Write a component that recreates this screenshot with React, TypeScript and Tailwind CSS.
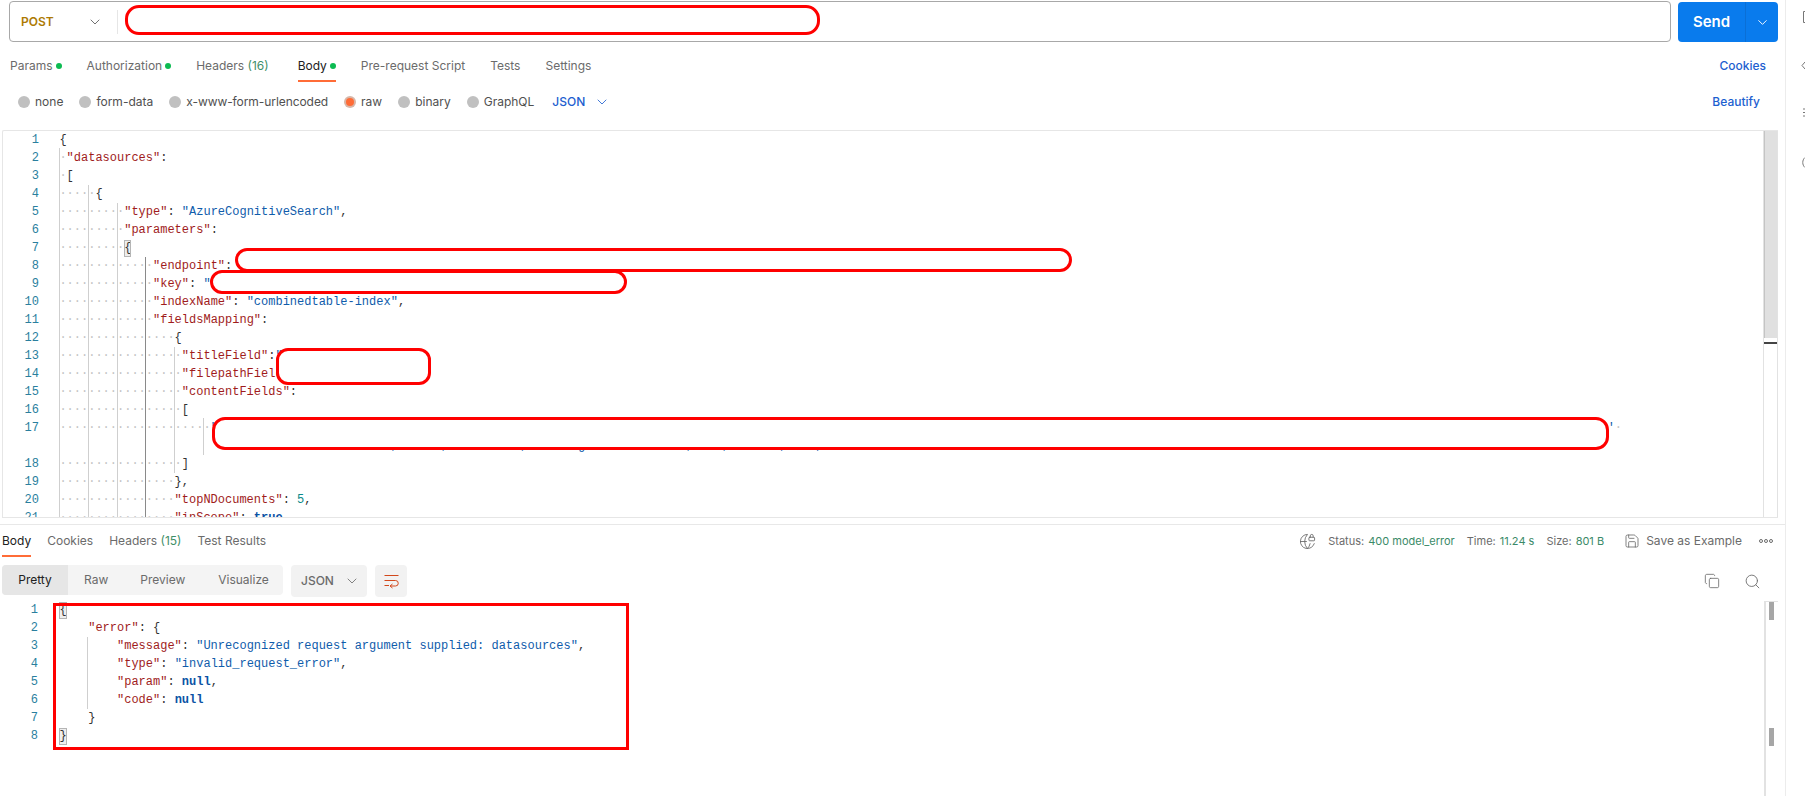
import React from "react";
import { ChevronDown, Copy, GlobeLock, Save, Search } from "lucide-react";

const Key = ({ children }: { children: React.ReactNode }) => <span className="text-[#a01c1c]">{children}</span>;
const Str = ({ children }: { children: React.ReactNode }) => <span className="text-[#0f5cab]">{children}</span>;
const Kw = ({ children }: { children: React.ReactNode }) => <span className="font-bold text-[#0b53a5]">{children}</span>;
const Match = ({ children }: { children: React.ReactNode }) => (
  <span className="inline-block h-[17px] bg-[#eeeeee] leading-[17px] outline outline-1 -outline-offset-1 outline-[#b5b5b5]">{children}</span>
);

type Line = { n?: number; indent?: number; body: React.ReactNode };

const requestLines: Line[] = [
  { n: 1, body: "{" },
  { n: 2, indent: 1, body: <><Key>"datasources"</Key>:</> },
  { n: 3, indent: 1, body: "[" },
  { n: 4, indent: 5, body: "{" },
  { n: 5, indent: 9, body: <><Key>"type"</Key>: <Str>"AzureCognitiveSearch"</Str>,</> },
  { n: 6, indent: 9, body: <><Key>"parameters"</Key>:</> },
  { n: 7, indent: 9, body: <Match>{"{"}</Match> },
  { n: 8, indent: 13, body: <><Key>"endpoint"</Key>:</> },
  { n: 9, indent: 13, body: <><Key>"key"</Key>: <Str>"</Str></> },
  { n: 10, indent: 13, body: <><Key>"indexName"</Key>: <Str>"combinedtable-index"</Str>,</> },
  { n: 11, indent: 13, body: <><Key>"fieldsMapping"</Key>:</> },
  { n: 12, indent: 16, body: "{" },
  { n: 13, indent: 17, body: <><Key>"titleField"</Key>:<Str>"</Str></> },
  { n: 14, indent: 17, body: <Key>"filepathField"</Key> },
  { n: 15, indent: 17, body: <><Key>"contentFields"</Key>:</> },
  { n: 16, indent: 17, body: "[" },
  { n: 17, indent: 21, body: <><Str>{'"' + " ".repeat(193) + "'"}</Str><span className="text-[#c4c4c4]">·</span></> },
  // only the tails of the wrapped row show under the red mark
  { body: <Str>{"                                              ,      ,          ,       g              ,    ,       ,    ,"}</Str> },
  { n: 18, indent: 17, body: "]" },
  { n: 19, indent: 16, body: "}," },
  { n: 20, indent: 16, body: <><Key>"topNDocuments"</Key>: <span className="text-[#0a8a8a]">5</span>,</> },
  { n: 21, indent: 16, body: <><Key>"inScope"</Key>: <Kw>true</Kw></> },
];

const responseLines: Line[] = [
  { n: 1, body: <Match>{"{"}</Match> },
  { n: 2, body: <>{"    "}<Key>"error"</Key>: {"{"}</> },
  { n: 3, body: <>{"        "}<Key>"message"</Key>: <Str>"Unrecognized request argument supplied: datasources"</Str>,</> },
  { n: 4, body: <>{"        "}<Key>"type"</Key>: <Str>"invalid_request_error"</Str>,</> },
  { n: 5, body: <>{"        "}<Key>"param"</Key>: <Kw>null</Kw>,</> },
  { n: 6, body: <>{"        "}<Key>"code"</Key>: <Kw>null</Kw></> },
  { n: 7, body: "    }" },
  { n: 8, body: <Match>{"}"}</Match> },
];

const CodeRow = ({ line }: { line: Line }) => (
  <div className="h-[18px] whitespace-pre leading-[18px] text-[#333333]">
    {line.indent ? <span className="text-[#c4c4c4]">{"·".repeat(line.indent)}</span> : null}
    {line.body}
  </div>
);

const Gutter = ({ lines }: { lines: Line[] }) => (
  <div className="shrink-0 text-right leading-[18px] text-[#2a7f9e]">
    {lines.map((l, i) => (
      <div key={i} className="h-[18px]">{l.n ?? ""}</div>
    ))}
  </div>
);

const Dot = () => <span className="h-[6px] w-[6px] rounded-full bg-[#0cbb52]" />;

const Tab = ({ label, count, dot, active }: { label: string; count?: string; dot?: boolean; active?: boolean }) => (
  <div className={`flex items-start gap-[3px] border-b-2 ${active ? "border-[#ff6c37] text-[#212121]" : "border-transparent text-[#6b6b6b]"}`}>
    <span>
      {label}
      {count ? <span className="text-[#3f8f68]"> {count}</span> : null}
    </span>
    {dot ? <span className="flex h-4 items-center"><Dot /></span> : null}
  </div>
);

const Radio = ({ label, on, tight }: { label: string; on?: boolean; tight?: boolean }) => (
  <div className={`flex items-center gap-[5px] text-[#505050] ${tight ? "tracking-[-0.07px]" : ""}`}>
    <span className={`flex h-3 w-3 items-center justify-center rounded-full ${on ? "bg-[#d8b6a8]" : "bg-[#c0c0c0]"}`}>
      {on ? <span className="h-2 w-2 rounded-full bg-[#ff6c37]" /> : null}
    </span>
    {label}
  </div>
);

const Stat = ({ label, value }: { label: string; value: string }) => (
  <div className="flex gap-[4px] text-[11px]">
    <span className="text-[#6b6b6b]">{label}</span>
    <span className="text-[#3a8a68]">{value}</span>
  </div>
);

export default function App() {
  return (
    <div className="relative flex h-[796px] w-full overflow-hidden bg-white text-xs [font-family:Inter,sans-serif]">
      <main className="flex w-[1786px] shrink-0 flex-col border-r border-[#ececec]">
        {/* адресная строка */}
        <div className="flex h-[43px] shrink-0 pl-[9px] pr-[7px] pt-[1px]">
          <div className="flex h-[41px] flex-1 items-center rounded-[4px] border border-[#a8a8a8]">
            <span className="ml-[11px] w-[66px] font-semibold text-[#ad7a03]">POST</span>
            <ChevronDown size={16} strokeWidth={1.25} className="text-[#555555]" />
            <span className="ml-[14px] h-[24px] w-px bg-[#e6e6e6]" />
          </div>
          <div className="ml-[7px] mt-[1px] flex h-[40px] w-[100px] rounded-[4px] bg-[#097bed] text-white">
            <div className="flex w-[67px] items-center justify-center text-[15px] font-semibold">Send</div>
            <div className="flex flex-1 items-center justify-center border-l border-[#0a6fd6]">
              <ChevronDown size={15} strokeWidth={1.5} />
            </div>
          </div>
        </div>

        {/* вкладки запроса */}
        <div className="flex h-[39px] shrink-0 justify-between pl-[10px] pr-[19px]">
          <div className="flex gap-[25px] pt-[15px]">
            <Tab label="Params" dot />
            <Tab label="Authorization" dot />
            <div className="mr-[4px]"><Tab label="Headers" count="(16)" /></div>
            <Tab label="Body" dot active />
            <Tab label="Pre-request Script" />
            <Tab label="Tests" />
            <Tab label="Settings" />
          </div>
          <div className="pt-[15px] font-medium text-[#1d5fd0]">Cookies</div>
        </div>

        <div className="flex h-[40px] shrink-0 items-center justify-between pl-[18px] pr-[25px]">
          <div className="flex items-center gap-4">
            <Radio label="none" />
            <Radio label="form-data" />
            <Radio label="x-www-form-urlencoded" tight />
            <Radio label="raw" on />
            <Radio label="binary" />
            <Radio label="GraphQL" />
            <div className="ml-[2px] flex items-center gap-[9px] font-medium text-[#1d5fd0]">
              JSON
              <ChevronDown size={16} strokeWidth={1.25} />
            </div>
          </div>
          <div className="font-medium text-[#1d5fd0]">Beautify</div>
        </div>

        {/* тело запроса */}
        <div className="ml-[2px] mr-[7px] mt-2 flex h-[388px] shrink-0 overflow-hidden rounded-tl-[2px] border border-r-0 border-[#e6e6e6] [font-family:'Liberation_Mono',monospace]">
          <div className="w-[36px] shrink-0"><Gutter lines={requestLines} /></div>
          <div className="relative ml-[20.4px] flex-1">
            {requestLines.map((l, i) => <CodeRow key={i} line={l} />)}
            <span className="absolute bottom-0 left-0 top-[17px] w-px bg-[#cfcfcf]" />
            <span className="absolute bottom-0 left-[29px] top-[54px] w-px bg-[#cfcfcf]" />
            <span className="absolute bottom-0 left-[58px] top-[72px] w-px bg-[#cfcfcf]" />
            <span className="absolute bottom-0 left-[86px] top-[126px] w-px bg-[#8a8a8a]" />
            <span className="absolute left-[115px] top-[216px] h-[126px] w-px bg-[#cfcfcf]" />
            <span className="absolute left-[144px] top-[287px] h-[37px] w-px bg-[#cfcfcf]" />
          </div>
          <div className="w-[15px] shrink-0 border-x border-[#e2e2e2]">
            <div className="h-[207px] border-l border-[#c4c4c4] bg-[#e0e0e0]" />
            <div className="mt-[4px] h-[2px] bg-[#444444]" />
          </div>
        </div>

        <div className="mt-[6px] h-px shrink-0 bg-[#e8e8e8]" />

        {/* вкладки ответа */}
        <div className="flex h-[32px] shrink-0 justify-between pl-[2px] pr-[12px]">
          <div className="flex gap-[16px] pt-[8px]">
            <Tab label="Body" active />
            <Tab label="Cookies" />
            <Tab label="Headers" count="(15)" />
            <Tab label="Test Results" />
          </div>
          <div className="flex h-[32px] items-center">
            <GlobeLock size={17} strokeWidth={1.25} className="mr-[12px] text-[#6b6b6b]" />
            <div className="flex gap-[12px]">
              <Stat label="Status:" value="400 model_error" />
              <Stat label="Time:" value="11.24 s" />
              <Stat label="Size:" value="801 B" />
            </div>
            <Save size={16} strokeWidth={1.25} className="ml-[20px] mr-[6px] text-[#6b6b6b]" />
            <span className="text-[#6b6b6b]">Save as Example</span>
            <svg width="14" height="6" viewBox="0 0 14 6" fill="none" stroke="#6b6b6b" className="ml-[17px]">
              <circle cx="2" cy="3" r="1.5" />
              <circle cx="7" cy="3" r="1.5" />
              <circle cx="12" cy="3" r="1.5" />
            </svg>
          </div>
        </div>

        <div className="mt-2 flex shrink-0 items-start pl-[2px] pr-[24px]">
          <div className="flex h-[30px] w-[281px] rounded-[4px] bg-[#f4f4f4] text-[#6b6b6b]">
            <div className="flex w-[66px] items-center justify-center rounded-l-[4px] bg-[#e6e6e6] text-[#212121]">Pretty</div>
            <div className="ml-[16px] flex items-center">Raw</div>
            <div className="ml-[32px] flex items-center">Preview</div>
            <div className="ml-[33px] flex items-center">Visualize</div>
          </div>
          <div className="ml-[8px] flex h-[32px] w-[76px] items-center rounded-[4px] bg-[#f2f2f2] pl-[10px] font-medium text-[#6b6b6b]">
            JSON
            <ChevronDown size={16} strokeWidth={1.25} className="ml-[10px]" />
          </div>
          <div className="ml-[8px] flex h-[32px] w-[32px] items-center justify-center rounded-[4px] bg-[#f2f2f2]">
            <svg width="15" height="15" viewBox="0 0 15 15" fill="none" stroke="#d2481c" strokeWidth="1">
              <path d="M0.5 1.5H14.5" />
              <path d="M0.5 6.5H11.5a2.5 2.5 0 0 1 0 5.5H6.5" />
              <path d="M8.5 10L6 12L8.5 14" />
              <path d="M0.5 11.5H5" />
            </svg>
          </div>
          <div className="ml-auto flex h-[32px] items-center gap-[24px] text-[#6b6b6b]">
            <Copy size={16} strokeWidth={1.25} />
            <Search size={17} strokeWidth={1.25} />
          </div>
        </div>

        {/* тело ответа */}
        <div className="mt-[4px] flex min-h-0 flex-1 [font-family:'Liberation_Mono',monospace]">
          <div className="w-[38px] shrink-0"><Gutter lines={responseLines} /></div>
          <div className="relative ml-[21.4px] flex-1">
            {responseLines.map((l, i) => <CodeRow key={i} line={l} />)}
            <span className="absolute left-[28px] top-[36px] h-[72px] w-px bg-[#cfcfcf]" />
          </div>
          <div className="mr-[7px] w-[14px] shrink-0 border-l-2 border-t border-[#e2e2e2] pl-[3px]">
            <div className="h-[18px] w-[5px] bg-[#a6a6a6]" />
            <div className="mt-[108px] h-[18px] w-[5px] bg-[#a6a6a6]" />
          </div>
        </div>
      </main>

      {/* край боковой панели, иконки обрезаны окном */}
      <svg width="19" height="180" viewBox="0 0 19 180" fill="none" stroke="#777777" className="shrink-0">
        <path d="M19 11.5H17.5V22.5H19" />
        <path d="M19 62L16 65.5L19 69" />
        <path d="M17 109H19M17 112.5H19M17 116H19" />
        <path d="M19 157.5C16 160 16 165 19 167.5" />
      </svg>

      {/* красные пометки поверх скриншота */}
      <div className="absolute left-[125px] top-[5px] h-[30px] w-[695px] rounded-[14px] border-[3px] border-[#ff0000] bg-white" />
      <div className="absolute left-[235px] top-[248px] h-[24px] w-[837px] rounded-full border-[3px] border-[#ff0000] bg-white" />
      <div className="absolute left-[210px] top-[270px] h-[24px] w-[417px] rounded-full border-[3px] border-[#ff0000] bg-white" />
      <div className="absolute left-[276px] top-[348px] h-[37px] w-[155px] rounded-[12px] border-[3px] border-[#ff0000] bg-white" />
      <div className="absolute left-[212px] top-[417px] h-[33px] w-[1397px] rounded-[13px] border-[3px] border-[#ff0000] bg-white" />
      <div className="absolute left-[53px] top-[603px] h-[147px] w-[576px] border-[3px] border-[#ff0000]" />
    </div>
  );
}
